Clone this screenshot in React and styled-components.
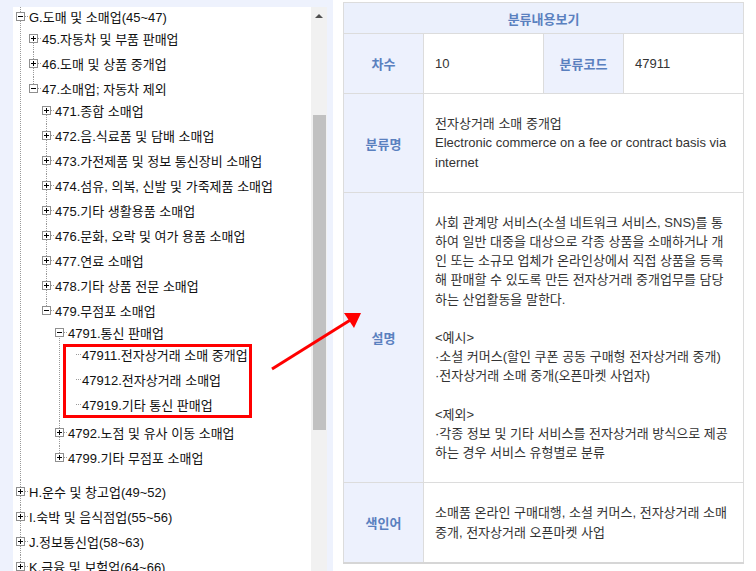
import React from 'react';
import styled, { createGlobalStyle, css } from 'styled-components';

/* colours */
const frameBlue = '#eef2fd';
const headBlue = '#ebf0fc';
const labelBg = '#edf1fd';
const labelBlue = '#5a80bf';
const cellLine = '#dcdcdc';
const dotGrey = '#9a9a9a';
const markRed = '#ff0000';

const GlobalStyle = createGlobalStyle`
  html, body {
    margin: 0;
    padding: 0;
    background: #fff;
    overflow: hidden;
  }
  body {
    font-family: "Liberation Sans", "Noto Sans CJK KR", sans-serif;
  }
`;

const Page = styled.div`
  position: relative;
  display: flex;
  align-items: flex-start;
  gap: 10px;
  width: 756px;
  height: 571px;
  overflow: hidden;
`;

/* ---------- left: tree ---------- */

const TreePanel = styled.div`
  display: flex;
  flex: none;
  width: 333px;
  height: 100%;
  box-sizing: border-box;
  padding: 7px 6px 0 13px;
  background: ${frameBlue};
`;

const TreeView = styled.div`
  flex: 1;
  min-width: 0;
  background: #fff;
  overflow: hidden;
`;

const ScrollBar = styled.div`
  display: flex;
  flex-direction: column;
  flex: none;
  width: 16px;
  background: #f1f1f1;
`;

const ScrollArrow = styled.div`
  display: flex;
  align-items: center;
  justify-content: center;
  height: 18px;

  &::before {
    content: '';
    border-left: 4px solid transparent;
    border-right: 4px solid transparent;
    border-bottom: 4px solid #505050;
  }
`;

const ScrollThumb = styled.div`
  width: 13px;
  height: 315px;
  margin: 90px 0 0 2px;
  background: #c1c1c1;
`;

const TreeList = styled.ul`
  position: relative;
  list-style: none;
  margin: 0;
  padding: 0 0 0 ${(p) => (p.$root ? 0 : 13)}px;
  ${(p) => p.$root && css`margin-top: -2px;`}
  ${(p) =>
    p.$marked &&
    css`
      &::after {
        content: '';
        position: absolute;
        left: 11px;
        top: 1px;
        bottom: 0;
        width: 189px;
        box-sizing: border-box;
        border: 3px solid ${markRed};
        pointer-events: none;
      }
    `}
`;

const TreeItem = styled.li`
  position: relative;
  padding-bottom: 3px;

  &::before {
    content: '';
    display: ${(p) => (p.$leaf ? 'none' : 'block')};
    position: absolute;
    left: 7px;
    top: ${(p) => (p.$first ? 11 : 0)}px;
    ${(p) => (p.$last ? `height: ${p.$first ? 0 : 11}px;` : 'bottom: 0;')}
    border-left: 1px dotted ${dotGrey};
  }
`;

const NodeLabel = styled.div`
  display: flex;
  align-items: center;
  height: 22px;
  padding-left: ${(p) => (p.$leaf ? 11 : 3)}px;
  font-size: 13px;
  color: #111;
  white-space: nowrap;
`;

const Toggle = styled.span`
  position: relative;
  z-index: 1;
  flex: none;
  width: 9px;
  height: 9px;
  box-sizing: border-box;
  border: 1px solid #8f8f8f;
  background: #fff;

  &::before {
    content: '';
    position: absolute;
    left: 1px;
    top: 3px;
    width: 5px;
    height: 1px;
    background: #000;
  }

  &::after {
    content: '';
    display: ${(p) => (p.$open ? 'none' : 'block')};
    position: absolute;
    left: 3px;
    top: 1px;
    width: 1px;
    height: 5px;
    background: #000;
  }
`;

const Connector = styled.span`
  flex: none;
  width: ${(p) => (p.$leaf ? 5 : 3)}px;
  margin-right: 1px;
  border-top: 1px dotted ${dotGrey};
`;

const tree = [
  {
    label: 'G.도매 및 소매업(45~47)',
    open: true,
    children: [
      { label: '45.자동차 및 부품 판매업' },
      { label: '46.도매 및 상품 중개업' },
      {
        label: '47.소매업; 자동차 제외',
        open: true,
        children: [
          { label: '471.종합 소매업' },
          { label: '472.음.식료품 및 담배 소매업' },
          { label: '473.가전제품 및 정보 통신장비 소매업' },
          { label: '474.섬유, 의복, 신발 및 가죽제품 소매업' },
          { label: '475.기타 생활용품 소매업' },
          { label: '476.문화, 오락 및 여가 용품 소매업' },
          { label: '477.연료 소매업' },
          { label: '478.기타 상품 전문 소매업' },
          {
            label: '479.무점포 소매업',
            open: true,
            children: [
              {
                label: '4791.통신 판매업',
                open: true,
                marked: true,
                children: [
                  { label: '47911.전자상거래 소매 중개업', leaf: true },
                  { label: '47912.전자상거래 소매업', leaf: true },
                  { label: '47919.기타 통신 판매업', leaf: true },
                ],
              },
              { label: '4792.노점 및 유사 이동 소매업' },
              { label: '4799.기타 무점포 소매업' },
            ],
          },
        ],
      },
    ],
  },
  { label: 'H.운수 및 창고업(49~52)' },
  { label: 'I.숙박 및 음식점업(55~56)' },
  { label: 'J.정보통신업(58~63)' },
  { label: 'K.금융 및 보험업(64~66)' },
  { label: 'L.부동산업(68)' },
  { label: 'M.전문, 과학 및 기술 서비스업(70~73)' },
];

function TreeNodes({ nodes, root, marked }) {
  return (
    <TreeList $root={root} $marked={marked}>
      {nodes.map((node, i) => (
        <TreeItem
          key={node.label}
          $leaf={node.leaf}
          /* the top level continues above and below the visible part */
          $first={!root && i === 0}
          $last={!root && i === nodes.length - 1}
        >
          <NodeLabel $leaf={node.leaf}>
            {!node.leaf && <Toggle $open={node.open} />}
            <Connector $leaf={node.leaf} />
            {node.label}
          </NodeLabel>
          {node.open && node.children && (
            <TreeNodes nodes={node.children} marked={node.marked} />
          )}
        </TreeItem>
      ))}
    </TreeList>
  );
}

/* ---------- right: detail table ---------- */

const InfoTable = styled.table`
  flex: none;
  width: 400px;
  margin-top: 2px;
  border-collapse: collapse;
  table-layout: fixed;
  font-size: 13px;
  color: #333;
  border-bottom: 2px solid #d6d6d6;
`;

const HeadCell = styled.th`
  height: 30px;
  padding: 0;
  background: ${headBlue};
  color: ${labelBlue};
  font-size: 13px;
  font-weight: bold;
  text-align: center;
  border: 1px solid ${cellLine};
`;

const LabelCell = styled.th`
  padding: 0;
  background: ${labelBg};
  color: ${labelBlue};
  font-size: 13px;
  font-weight: bold;
  text-align: center;
  vertical-align: middle;
  border: 1px solid ${cellLine};
`;

const ValueCell = styled.td`
  padding: 20px 8px 20px 11px;
  line-height: 19.2px;
  vertical-align: middle;
  white-space: nowrap;
  border: 1px solid ${cellLine};
`;

const Annotation = styled.svg`
  position: absolute;
  left: 0;
  top: 0;
  width: 756px;
  height: 571px;
  pointer-events: none;
`;

export default function App() {
  return (
    <>
      <GlobalStyle />
      <Page>
        <TreePanel>
          <TreeView>
            <TreeNodes nodes={tree} root />
          </TreeView>
          <ScrollBar>
            <ScrollArrow />
            <ScrollThumb />
          </ScrollBar>
        </TreePanel>

        <InfoTable>
          <colgroup>
            <col style={{ width: 80 }} />
            <col style={{ width: 120 }} />
            <col style={{ width: 80 }} />
            <col style={{ width: 120 }} />
          </colgroup>
          <tbody>
            <tr>
              <HeadCell colSpan={4}>분류내용보기</HeadCell>
            </tr>
            <tr>
              <LabelCell>차수</LabelCell>
              <ValueCell>10</ValueCell>
              <LabelCell>분류코드</LabelCell>
              <ValueCell>47911</ValueCell>
            </tr>
            <tr>
              <LabelCell>분류명</LabelCell>
              <ValueCell colSpan={3}>
                전자상거래 소매 중개업
                <br />
                Electronic commerce on a fee or contract basis via
                <br />
                internet
              </ValueCell>
            </tr>
            <tr>
              <LabelCell>설명</LabelCell>
              <ValueCell colSpan={3}>
                사회 관계망 서비스(소셜 네트워크 서비스, SNS)를 통<br />
                하여 일반 대중을 대상으로 각종 상품을 소매하거나 개<br />
                인 또는 소규모 업체가 온라인상에서 직접 상품을 등록<br />
                해 판매할 수 있도록 만든 전자상거래 중개업무를 담당<br />
                하는 산업활동을 말한다.<br />
                <br />
                {'<예시>'}<br />
                ·소셜 커머스(할인 쿠폰 공동 구매형 전자상거래 중개)<br />
                ·전자상거래 소매 중개(오픈마켓 사업자)<br />
                <br />
                {'<제외>'}<br />
                ·각종 정보 및 기타 서비스를 전자상거래 방식으로 제공<br />
                하는 경우 서비스 유형별로 분류
              </ValueCell>
            </tr>
            <tr>
              <LabelCell>색인어</LabelCell>
              <ValueCell colSpan={3}>
                소매품 온라인 구매대행, 소셜 커머스, 전자상거래 소매<br />
                중개, 전자상거래 오픈마켓 사업
              </ValueCell>
            </tr>
          </tbody>
        </InfoTable>

        <Annotation viewBox="0 0 756 571">
          <line x1="272" y1="369" x2="352" y2="319" stroke={markRed} strokeWidth="3" />
          <polygon points="361,313 344,313 354,328" fill={markRed} />
        </Annotation>
      </Page>
    </>
  );
}
